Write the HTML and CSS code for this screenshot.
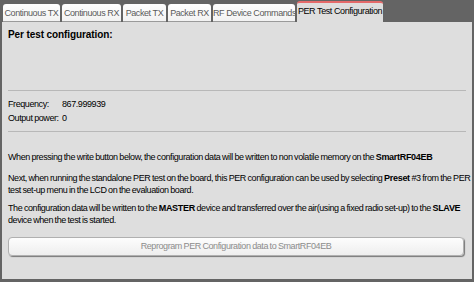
FILE: index.html
```html
<!DOCTYPE html>
<html>
<head>
<meta charset="utf-8">
<link rel="stylesheet" href="styles.css">
</head>
<body>
<div class="window">
  <div class="tabs">
    <div class="tab w1">Continuous TX</div>
    <div class="tab w2">Continuous RX</div>
    <div class="tab w3">Packet TX</div>
    <div class="tab w4">Packet RX</div>
    <div class="tab w5">RF Device Commands</div>
    <div class="tab active">PER Test Configuration</div>
  </div>
  <div class="panel">
    <div class="title">Per test configuration:</div>
    <div class="sep first"></div>
    <div class="info">
      <div class="row"><span class="label">Frequency:</span><span>867.999939</span></div>
      <div class="row"><span class="label">Output power:</span><span>0</span></div>
    </div>
    <div class="sep"></div>
    <p class="p1">When pressing the write button below, the configuration data will be written to non volatile memory on the <b>SmartRF04EB</b></p>
    <p class="p2">Next, when running the standalone PER test on the board, this PER configuration can be used by selecting <b>Preset</b> #3 from the PER<br>test set-up menu in the LCD on the evaluation board.</p>
    <p class="p3">The configuration data will be written to the <b>MASTER</b> device and transferred over the air(using a fixed radio set-up) to the <b>SLAVE</b><br>device when the test is started.</p>
    <div class="button">Reprogram PER Configuration data to SmartRF04EB</div>
  </div>
</div>
</body>
</html>
```
FILE: styles.css
```css
html, body { margin: 0; padding: 0; }
body {
  width: 474px; height: 282px; overflow: hidden;
  background: #646464;
  font-family: "Liberation Sans", Arial, sans-serif;
  font-size: 9px;
  letter-spacing: -0.42px;
  word-spacing: -0.45px;
  color: #000;
}
.window { display: flex; flex-direction: column; height: 282px; }
.tabs { display: flex; height: 22px; padding-left: 3px; gap: 2px; align-items: flex-end; }
.tab {
  flex-shrink: 0;
  height: 18px; box-sizing: border-box;
  background: linear-gradient(#ffffff, #f2f2f2);
  border-radius: 3px 3px 0 0;
  border-bottom: 1px solid #9a9a9a;
  color: #5a5a5a;
  line-height: 18px;
  text-align: center;
  white-space: nowrap;
  overflow: hidden;
  word-spacing: 0;
}
.w1 { width: 57px; }
.w2 { width: 59px; }
.w3 { width: 43px; }
.w4 { width: 43px; }
.w5 { width: 82px; }
.tab.active {
  width: 86px;
  height: 21px;
  background: #dedede;
  border-top: 2px solid #e46a6a;
  border-bottom: none;
  color: #000;
  line-height: 17px;
}
.panel {
  flex: 1;
  margin: 0 2px 3px 2px;
  background: #dedede;
  padding: 6px 6px 0 6px;
  white-space: nowrap;
}
.title { font-weight: bold; font-size: 10px; letter-spacing: -0.1px; word-spacing: 0; height: 14px; line-height: 14px; }
.sep { height: 1px; background: #b8b8b8; }
.sep.first { margin-top: 48px; }
.info { padding: 6px 0 6px 0; }
.row { height: 14px; line-height: 14px; display: flex; }
.label { width: 54px; }
p { margin: 0; line-height: 12px; }
p b { letter-spacing: -0.3px; }
p.p1 { margin-top: 19px; }
p.p2 { margin-top: 9px; }
p.p3 { margin-top: 6px; }
.button {
  margin-top: 11px;
  margin-right: 2px;
  height: 19px;
  box-sizing: border-box;
  background: linear-gradient(#fdfdfd, #eeeeee);
  border: 1px solid #b0b0b0;
  border-radius: 4px;
  box-shadow: 1px 1px 1px #777;
  color: #8c8c8c;
  text-align: center;
  line-height: 17px;
}
```
